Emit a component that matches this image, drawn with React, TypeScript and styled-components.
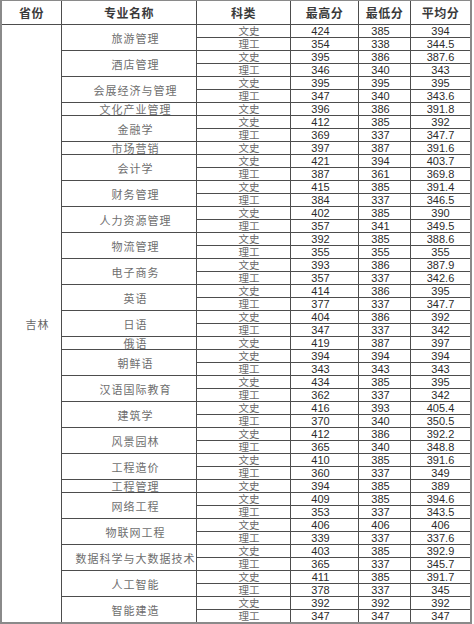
import React from "react";
import styled, { createGlobalStyle } from "styled-components";

const Global = createGlobalStyle`
  html, body { margin: 0; padding: 0; background: #ffffff; }
  body { font-family: "Noto Sans CJK SC", "Liberation Sans", sans-serif; }
`;

type Row = { t: string; hi: string; lo: string; avg: string };
type Major = { name: string; rows: Row[] };

const W = "文史";
const L = "理工";
const r = (t: string, hi: string, lo: string, avg: string): Row => ({ t, hi, lo, avg });

const majors: Major[] = [
  { name: "旅游管理", rows: [r(W, "424", "385", "394"), r(L, "354", "338", "344.5")] },
  { name: "酒店管理", rows: [r(W, "395", "386", "387.6"), r(L, "346", "340", "343")] },
  { name: "会展经济与管理", rows: [r(W, "395", "395", "395"), r(L, "347", "340", "343.6")] },
  { name: "文化产业管理", rows: [r(W, "396", "386", "391.8")] },
  { name: "金融学", rows: [r(W, "412", "385", "392"), r(L, "369", "337", "347.7")] },
  { name: "市场营销", rows: [r(W, "397", "387", "391.6")] },
  { name: "会计学", rows: [r(W, "421", "394", "403.7"), r(L, "387", "361", "369.8")] },
  { name: "财务管理", rows: [r(W, "415", "385", "391.4"), r(L, "384", "337", "346.5")] },
  { name: "人力资源管理", rows: [r(W, "402", "385", "390"), r(L, "357", "341", "349.5")] },
  { name: "物流管理", rows: [r(W, "392", "385", "388.6"), r(L, "355", "355", "355")] },
  { name: "电子商务", rows: [r(W, "393", "386", "387.9"), r(L, "357", "337", "342.6")] },
  { name: "英语", rows: [r(W, "414", "386", "395"), r(L, "377", "337", "347.7")] },
  { name: "日语", rows: [r(W, "404", "386", "392"), r(L, "347", "337", "342")] },
  { name: "俄语", rows: [r(W, "419", "387", "397")] },
  { name: "朝鲜语", rows: [r(W, "394", "394", "394"), r(L, "343", "343", "343")] },
  { name: "汉语国际教育", rows: [r(W, "434", "385", "395"), r(L, "362", "337", "342")] },
  { name: "建筑学", rows: [r(W, "416", "393", "405.4"), r(L, "370", "340", "350.5")] },
  { name: "风景园林", rows: [r(W, "412", "386", "392.2"), r(L, "365", "340", "348.8")] },
  { name: "工程造价", rows: [r(W, "410", "385", "391.6"), r(L, "360", "337", "349")] },
  { name: "工程管理", rows: [r(W, "394", "385", "389")] },
  { name: "网络工程", rows: [r(W, "409", "385", "394.6"), r(L, "353", "337", "343.5")] },
  { name: "物联网工程", rows: [r(W, "406", "406", "406"), r(L, "339", "337", "337.6")] },
  { name: "数据科学与大数据技术", rows: [r(W, "403", "385", "392.9"), r(L, "365", "337", "345.7")] },
  { name: "人工智能", rows: [r(W, "411", "385", "391.7"), r(L, "378", "337", "345")] },
  { name: "智能建造", rows: [r(W, "392", "392", "392"), r(L, "347", "347", "347")] },
];

const totalRows = majors.reduce((n, m) => n + m.rows.length, 0);

const Sheet = styled.div<{ $rows: number }>`
  box-sizing: border-box;
  width: 472px;
  display: grid;
  grid-template-columns: 59px 134px 93px 67px 51px 59px;
  grid-template-rows: 23px repeat(${(p) => p.$rows}, 12px);
  gap: 1px;
  background: #4d4d4d;
  border-top: 1px solid #8a8a8a;
  border-left: 2px solid #8a8a8a;
  border-right: 2px solid #8a8a8a;
  border-bottom: 2px solid #8a8a8a;
`;

const Cell = styled.div<{ $col: number }>`
  grid-column: ${(p) => p.$col};
  background: #ffffff;
  display: flex;
  align-items: center;
  justify-content: center;
  white-space: nowrap;
  overflow: visible;
  min-width: 0;
`;

const HeaderCell = styled(Cell)`
  font-family: "Noto Sans CJK SC", sans-serif;
  font-weight: 700;
  font-size: 12px;
  color: #3a3a3a;
  letter-spacing: 0.5px;
`;

const ProvinceCell = styled(Cell)<{ $span: number }>`
  grid-row: span ${(p) => p.$span};
  padding-left: 12px;
  font-size: 11px;
  color: #666666;
  letter-spacing: 1px;
`;

const MajorCell = styled(Cell)<{ $span: number }>`
  grid-row: span ${(p) => p.$span};
  padding-left: 13px;
  font-size: 11px;
  line-height: 12px;
  color: #6e6e6e;
  letter-spacing: 1px;
`;

const TypeCell = styled(Cell)`
  padding-left: 11px;
  font-size: 10.5px;
  line-height: 12px;
  color: #6a6a6a;
`;

const NumCell = styled(Cell)<{ $shift: number }>`
  padding-right: ${(p) => (p.$shift > 0 ? p.$shift : 0)}px;
  padding-left: ${(p) => (p.$shift < 0 ? -p.$shift : 0)}px;
  font-family: "Liberation Sans", Arial, sans-serif;
  font-size: 11px;
  line-height: 12px;
  color: #2b2b2b;
`;

export default function App() {
  return (
    <>
      <Global />
      <Sheet $rows={totalRows}>
        <HeaderCell $col={1}>省份</HeaderCell>
        <HeaderCell $col={2}>专业名称</HeaderCell>
        <HeaderCell $col={3}>科类</HeaderCell>
        <HeaderCell $col={4}>最高分</HeaderCell>
        <HeaderCell $col={5}>最低分</HeaderCell>
        <HeaderCell $col={6}>平均分</HeaderCell>
        <ProvinceCell $col={1} $span={totalRows}>吉林</ProvinceCell>
        {majors.map((m) =>
          m.rows.map((row, i) => (
            <React.Fragment key={m.name + i}>
              {i === 0 && (
                <MajorCell $col={2} $span={m.rows.length}>
                  {m.name}
                </MajorCell>
              )}
              <TypeCell $col={3}>{row.t}</TypeCell>
              <NumCell $col={4} $shift={8}>{row.hi}</NumCell>
              <NumCell $col={5} $shift={8}>{row.lo}</NumCell>
              <NumCell $col={6} $shift={0}>{row.avg}</NumCell>
            </React.Fragment>
          ))
        )}
      </Sheet>
    </>
  );
}
